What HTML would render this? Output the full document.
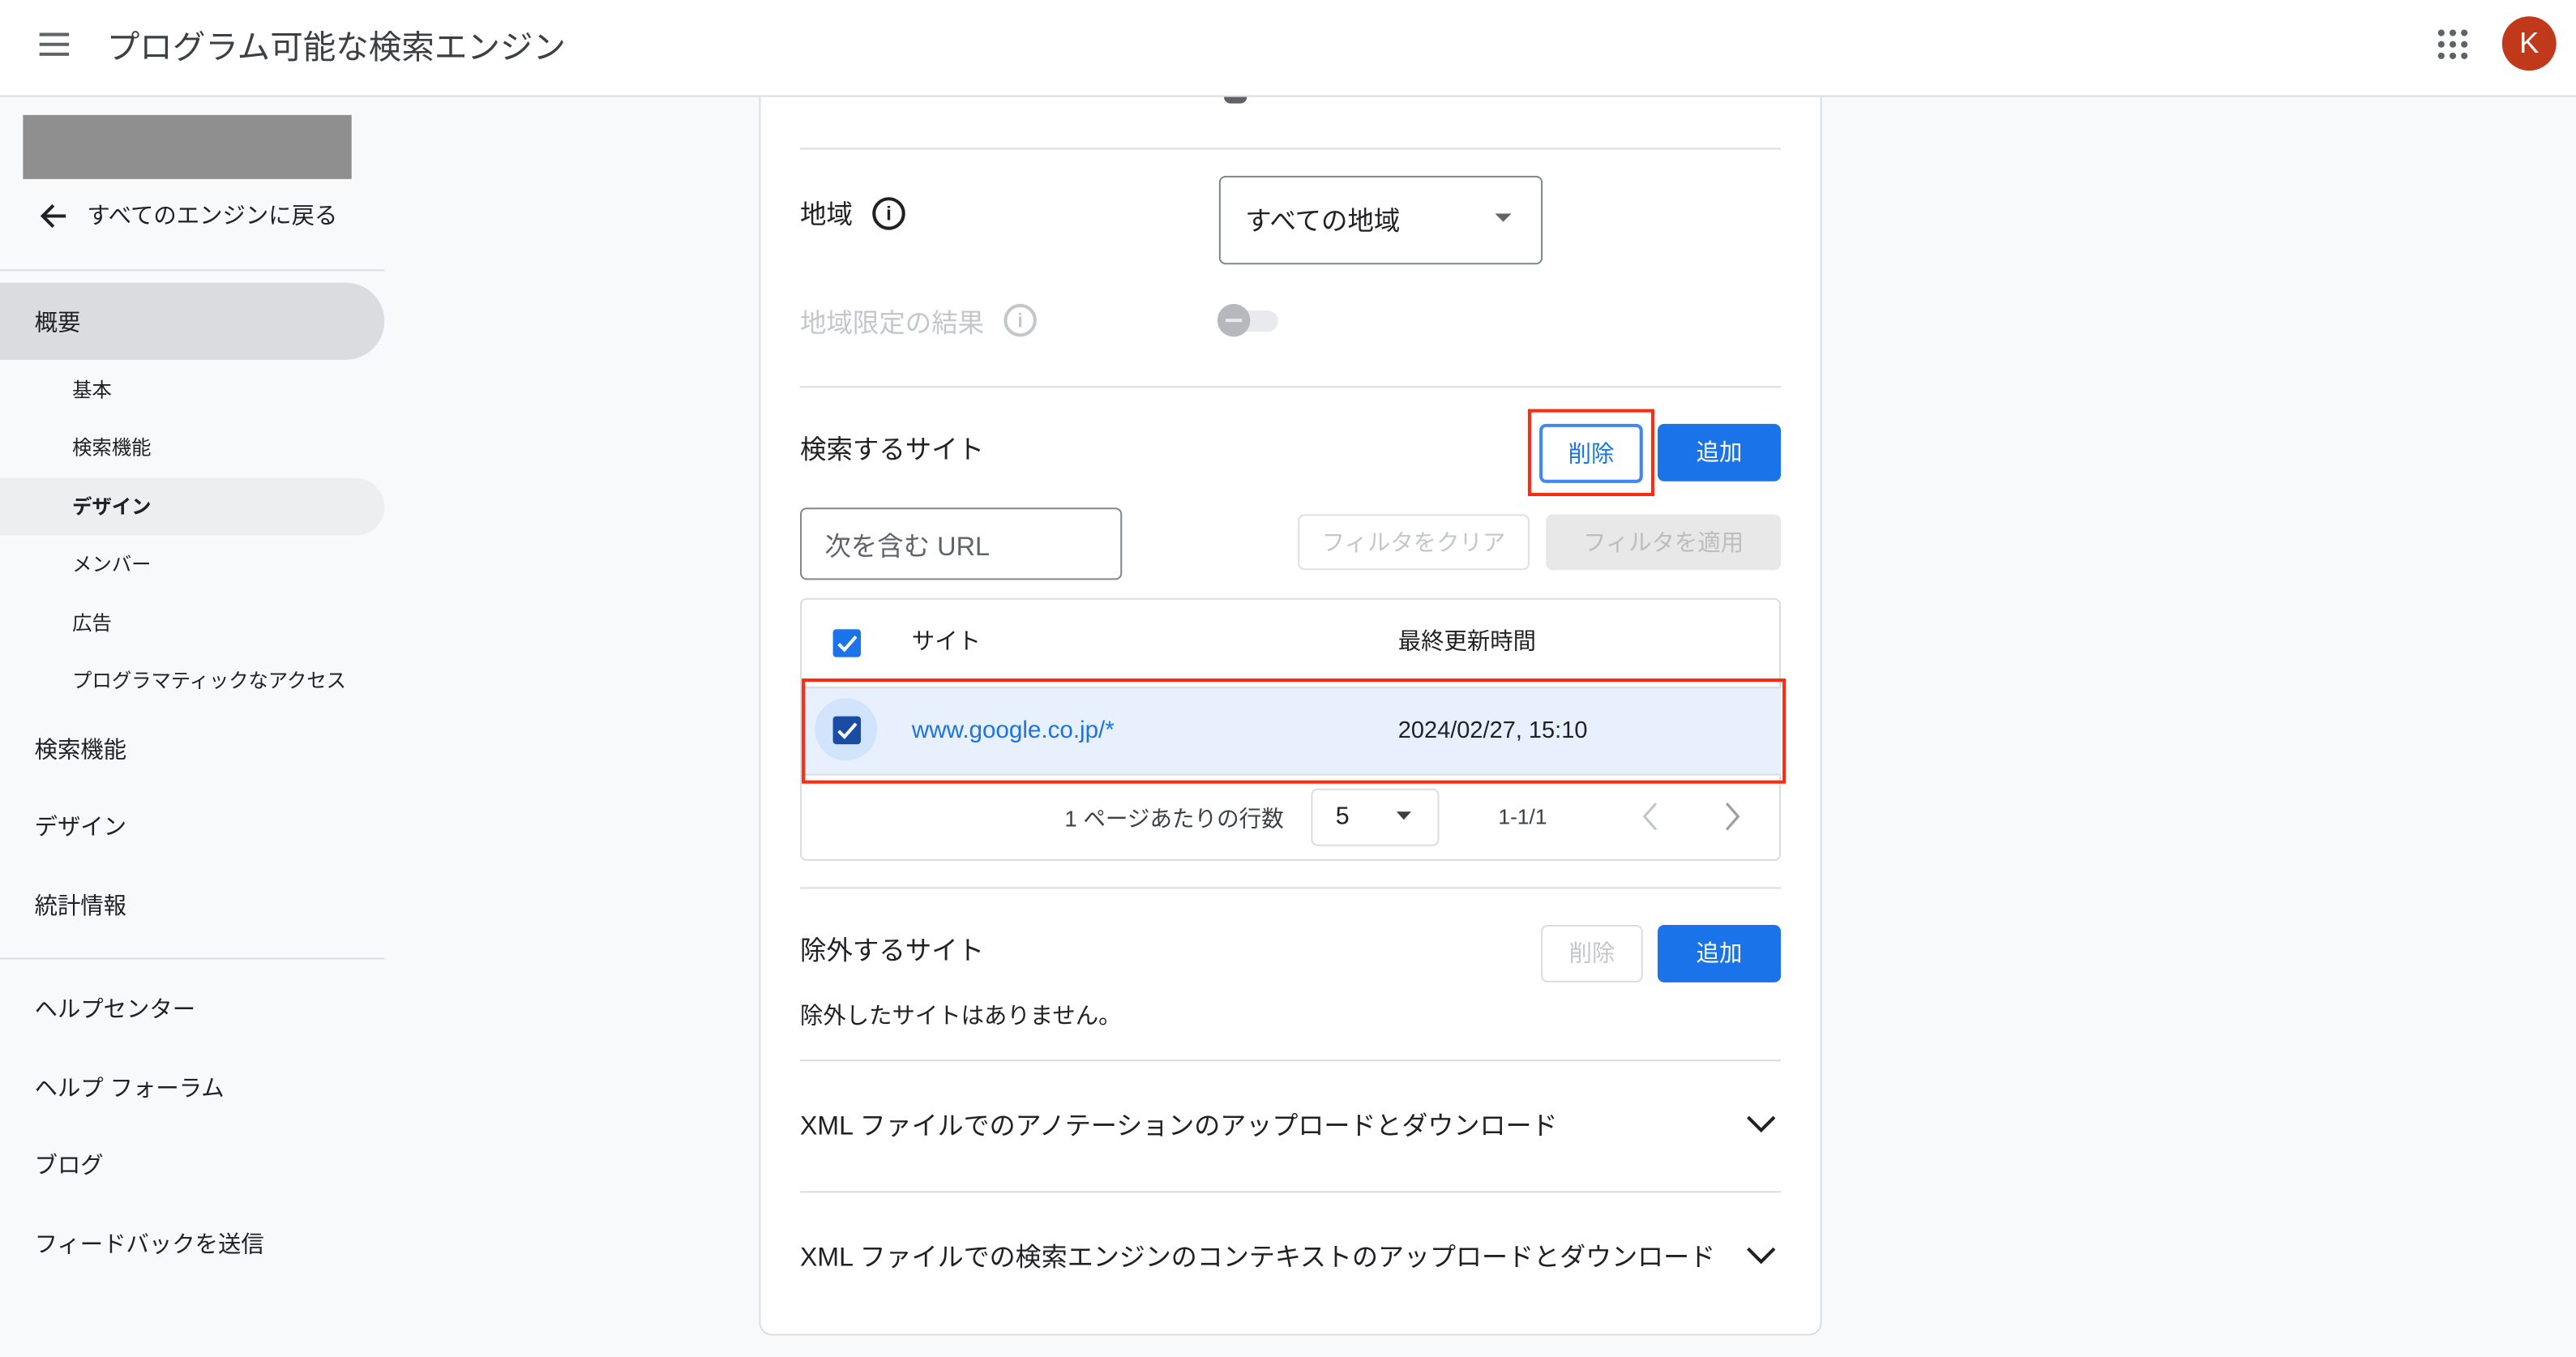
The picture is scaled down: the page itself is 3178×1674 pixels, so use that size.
<!DOCTYPE html>
<html><head><meta charset="utf-8"><style>
*{margin:0;padding:0;box-sizing:border-box}
html,body{width:3178px;height:1674px;overflow:hidden;background:#f8f9fa}
#w{position:absolute;left:0;top:0;width:1568px;height:826px;transform:scale(2.02679,2.02663);transform-origin:0 0;font-family:"Liberation Sans","Noto Sans CJK JP",sans-serif;color:#202124;background:#f8f9fa}
.a{position:absolute;white-space:nowrap}
.t{position:absolute;white-space:nowrap;transform:translateY(-50%)}
.hr{position:absolute;height:1px;background:#dadce0}
</style></head><body><div id="w">
<div class="a" style="left:462px;top:58px;width:647px;height:755px;background:#fff;border:1px solid #dadce0;border-top:none;border-radius:0 0 8px 8px"></div>
<div class="a" style="left:0;top:0;width:1568px;height:59px;background:#fff;border-bottom:1px solid #dadce0"></div>
<svg class="a" style="left:22px;top:17px" width="22" height="20" viewBox="0 0 22 20"><path d="M2 4h18M2 10h18M2 16h18" stroke="#5f6368" stroke-width="2"/></svg>
<div class="t" style="left:65px;top:27px;font-size:20px;color:#3c4043">プログラム可能な検索エンジン</div>
<svg class="a" style="left:1483px;top:17px" width="20" height="20" viewBox="0 0 20 20" fill="#5f6368"><circle cx="3" cy="3" r="2"/><circle cx="10" cy="3" r="2"/><circle cx="17" cy="3" r="2"/><circle cx="3" cy="10" r="2"/><circle cx="10" cy="10" r="2"/><circle cx="17" cy="10" r="2"/><circle cx="3" cy="17" r="2"/><circle cx="10" cy="17" r="2"/><circle cx="17" cy="17" r="2"/></svg>
<div class="a" style="left:1523px;top:10px;width:33px;height:33px;border-radius:50%;background:#c0391b;color:#fff;font-size:18px;text-align:center;line-height:33px">K</div>

<div class="a" style="left:14px;top:70px;width:200px;height:39px;background:#8f8f8f"></div>
<svg class="a" style="left:23px;top:122px" width="19" height="19" viewBox="0 0 19 19"><path d="M17 9.5H3M9.5 3L3 9.5l6.5 6.5" stroke="#202124" stroke-width="2" fill="none"/></svg>
<div class="t" style="left:53px;top:131px;font-size:14px">すべてのエンジンに戻る</div>
<div class="hr" style="left:0;top:164px;width:234px"></div>
<div class="a" style="left:0;top:172px;width:234px;height:47px;background:#dadce0;border-radius:0 24px 24px 0"></div>
<div class="t" style="left:21px;top:196px;font-size:14px">概要</div>
<div class="a" style="left:0;top:291px;width:234px;height:35px;background:#eceef0;border-radius:0 18px 18px 0"></div>
<div class="t" style="left:44px;top:237px;font-size:12px">基本</div>
<div class="t" style="left:44px;top:272px;font-size:12px">検索機能</div>
<div class="t" style="left:44px;top:308px;font-size:12px;font-weight:bold">デザイン</div>
<div class="t" style="left:44px;top:343px;font-size:12px">メンバー</div>
<div class="t" style="left:44px;top:379px;font-size:12px">広告</div>
<div class="t" style="left:44px;top:414px;font-size:12px">プログラマティックなアクセス</div>
<div class="t" style="left:21px;top:456px;font-size:14px">検索機能</div>
<div class="t" style="left:21px;top:503px;font-size:14px">デザイン</div>
<div class="t" style="left:21px;top:551px;font-size:14px">統計情報</div>
<div class="hr" style="left:0;top:583px;width:234px"></div>
<div class="t" style="left:21px;top:614px;font-size:14px">ヘルプセンター</div>
<div class="t" style="left:21px;top:662px;font-size:14px">ヘルプ フォーラム</div>
<div class="t" style="left:21px;top:709px;font-size:14px">ブログ</div>
<div class="t" style="left:21px;top:757px;font-size:14px">フィードバックを送信</div>

<div class="a" style="left:745px;top:59px;width:14px;height:4px;background:#5f6368;border-radius:0 0 7px 7px"></div>
<div class="hr" style="left:487px;top:90px;width:597px"></div>
<div class="t" style="left:487px;top:129px;font-size:16px">地域</div>
<div class="a" style="left:531px;top:120px;width:20px;height:20px;border:2px solid #202124;border-radius:50%;font-size:12px;font-weight:bold;text-align:center;line-height:16px">i</div>
<div class="a" style="left:742px;top:107px;width:197px;height:54px;border:1px solid #80868b;border-radius:4px"></div>
<div class="t" style="left:758px;top:133px;font-size:16px">すべての地域</div>
<svg class="a" style="left:910px;top:130px" width="10" height="6"><path d="M0 0h10L5 5z" fill="#5f6368"/></svg>
<div class="t" style="left:487px;top:195px;font-size:16px;color:#c4c7ca">地域限定の結果</div>
<div class="a" style="left:611px;top:185px;width:20px;height:20px;border:2px solid #c4c7ca;color:#c4c7ca;border-radius:50%;font-size:12px;font-weight:bold;text-align:center;line-height:16px">i</div>
<div class="a" style="left:745px;top:189px;width:33px;height:13px;background:#e8eaed;border-radius:7px"></div>
<div class="a" style="left:741px;top:185px;width:20px;height:20px;background:#b5b8bc;border-radius:50%"></div>
<div class="a" style="left:746px;top:194px;width:10px;height:2px;background:#e8eaed"></div>
<div class="hr" style="left:487px;top:235px;width:597px"></div>

<div class="t" style="left:487px;top:272px;font-size:16px">検索するサイト</div>
<div class="a" style="left:930px;top:249px;width:77px;height:53px;border:2px solid #ff2a10"></div>
<div class="a" style="left:937px;top:258px;width:63px;height:36px;border:2px solid #4285f4;border-radius:4px;color:#1a73e8;font-size:14px;text-align:center;line-height:32px">削除</div>
<div class="a" style="left:1009px;top:258px;width:75px;height:35px;background:#1a73e8;border-radius:4px;color:#fff;font-size:14px;text-align:center;line-height:35px">追加</div>
<div class="a" style="left:487px;top:309px;width:196px;height:44px;border:1px solid #80868b;border-radius:4px"></div>
<div class="t" style="left:502px;top:331px;font-size:16px;color:#5f6368">次を含む URL</div>
<div class="a" style="left:790px;top:313px;width:141px;height:34px;border:1px solid #e0e0e0;border-radius:4px;color:#c4c7ca;font-size:14px;text-align:center;line-height:32px">フィルタをクリア</div>
<div class="a" style="left:941px;top:313px;width:143px;height:34px;background:#e8e8e8;border-radius:4px;color:#bdbdbd;font-size:14px;text-align:center;line-height:34px">フィルタを適用</div>

<div class="a" style="left:487px;top:364px;width:597px;height:160px;border:1px solid #dadce0;border-radius:4px"></div>
<div class="a" style="left:507px;top:383px;width:17px;height:17px;background:#1a73e8;border-radius:2px"></div>
<svg class="a" style="left:507px;top:383px" width="17" height="17"><path d="M3.5 9l3.5 3.5 7-8" stroke="#fff" stroke-width="2" fill="none"/></svg>
<div class="t" style="left:555px;top:390px;font-size:14px">サイト</div>
<div class="t" style="left:851px;top:390px;font-size:14px">最終更新時間</div>
<div class="a" style="left:488px;top:418px;width:596px;height:54px;background:#e8f0fe;border-top:1px solid #dadce0;border-bottom:1px solid #dadce0"></div>
<div class="a" style="left:488px;top:413px;width:599px;height:64px;border:2px solid #ff2a10"></div>
<div class="a" style="left:496px;top:425px;width:38px;height:38px;background:#d2e3fc;border-radius:50%"></div>
<div class="a" style="left:507px;top:436px;width:17px;height:17px;background:#1a4ca3;border-radius:2px"></div>
<svg class="a" style="left:507px;top:436px" width="17" height="17"><path d="M3.5 9l3.5 3.5 7-8" stroke="#fff" stroke-width="2" fill="none"/></svg>
<div class="t" style="left:555px;top:445px;font-size:14.6px;color:#1a73e8">www.google.co.jp/*</div>
<div class="t" style="left:851px;top:445px;font-size:14.3px">2024/02/27, 15:10</div>
<div class="t" style="left:648px;top:497px;font-size:13.6px;color:#3c4043">1 ページあたりの行数</div>
<div class="a" style="left:798px;top:480px;width:78px;height:35px;border:1px solid #dadce0;border-radius:4px"></div>
<div class="t" style="left:813px;top:497px;font-size:15px">5</div>
<svg class="a" style="left:850px;top:494px" width="9" height="6"><path d="M0 0h9L4.5 5z" fill="#3c4043"/></svg>
<div class="t" style="left:912px;top:497px;font-size:13px;color:#3c4043">1-1/1</div>
<svg class="a" style="left:998px;top:488px" width="12" height="18"><path d="M10 1L3 9l7 8" stroke="#c4c7ca" stroke-width="1.6" fill="none"/></svg>
<svg class="a" style="left:1049px;top:488px" width="12" height="18"><path d="M2 1l7 8-7 8" stroke="#9aa0a6" stroke-width="1.6" fill="none"/></svg>
<div class="hr" style="left:487px;top:540px;width:597px"></div>

<div class="t" style="left:487px;top:577px;font-size:16px">除外するサイト</div>
<div class="a" style="left:938px;top:563px;width:62px;height:35px;border:1px solid #dadce0;border-radius:4px;color:#c4c7ca;font-size:14px;text-align:center;line-height:33px">削除</div>
<div class="a" style="left:1009px;top:563px;width:75px;height:35px;background:#1a73e8;border-radius:4px;color:#fff;font-size:14px;text-align:center;line-height:35px">追加</div>
<div class="t" style="left:487px;top:618px;font-size:14px">除外したサイトはありません。</div>
<div class="hr" style="left:487px;top:645px;width:597px"></div>
<div class="t" style="left:487px;top:684px;font-size:15.8px">XML ファイルでのアノテーションのアップロードとダウンロード</div>
<svg class="a" style="left:1063px;top:679px" width="18" height="11"><path d="M1 1l8 8 8-8" stroke="#202124" stroke-width="2" fill="none"/></svg>
<div class="hr" style="left:487px;top:725px;width:597px"></div>
<div class="t" style="left:487px;top:764px;font-size:15.8px">XML ファイルでの検索エンジンのコンテキストのアップロードとダウンロード</div>
<svg class="a" style="left:1063px;top:759px" width="18" height="11"><path d="M1 1l8 8 8-8" stroke="#202124" stroke-width="2" fill="none"/></svg>
</div></body></html>
